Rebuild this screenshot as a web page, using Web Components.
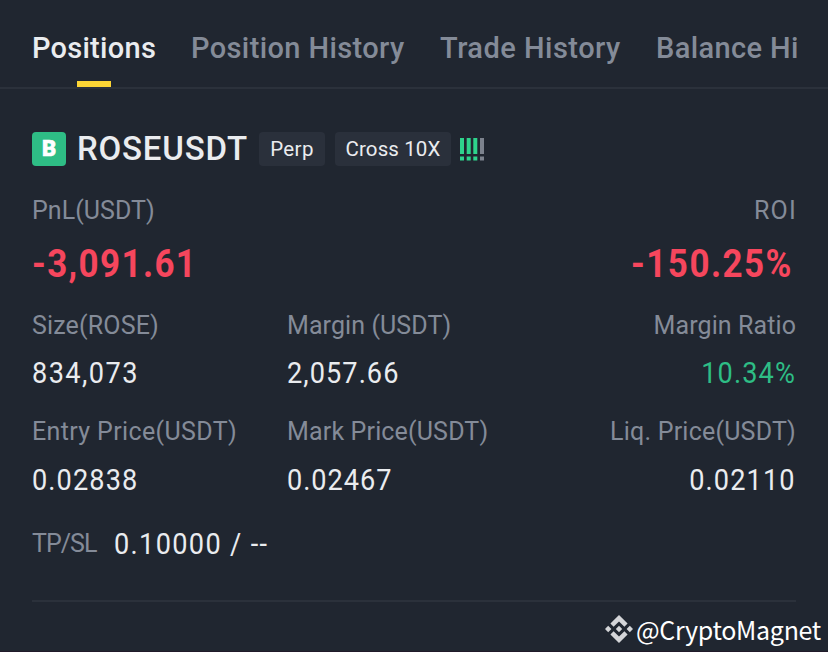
<!DOCTYPE html>
<html lang="en"><head><meta charset="utf-8"><title>Positions</title>
<style>html,body{margin:0;background:#202630}</style></head>
<body>
<positions-page></positions-page>
<script>
// One line of text: size, weight, tracking and horizontal scale come from attributes.
class UiText extends HTMLElement{
  connectedCallback(){
    const a=(n,d)=>this.getAttribute(n)||d;
    this.attachShadow({mode:'open'}).innerHTML=`<style>
    :host{display:block;white-space:nowrap;font:${a('weight','400')} ${a('size','25')}px/${a('line','30')}px Roboto,"Noto Sans",sans-serif;letter-spacing:${a('track','0')}px}
    span{display:inline-block;transform:scaleX(${a('scale','1')});transform-origin:${a('origin','left')} center}
    </style><span><slot></slot></span>`;
  }
}
customElements.define('ui-text',UiText);

class TabBar extends HTMLElement{
  constructor(){super();this.attachShadow({mode:'open'}).innerHTML=`<style>
  :host{display:flex;box-sizing:border-box;height:89px;border-bottom:2px solid #2b313b;padding:0 31.5px 0 32px;color:#848b98}
  nav{display:flex;flex:1;min-width:0;overflow:hidden}
  div{flex:none;display:flex;flex-direction:column;align-items:center;justify-content:space-between;height:87px;padding-top:28px;box-sizing:border-box}
  .on{color:#eaecef}
  .on i{width:34px;height:6px;background:#fcd535}
  </style><nav>
  <div class="on" style="width:159px;padding-right:35px;"><ui-text weight="500" size="29" line="40" track=".28">Positions</ui-text><i></i></div>
  <div style="width:249px;align-items:flex-start"><ui-text weight="500" size="29" line="40" track=".39">Position History</ui-text></div>
  <div style="width:216px;align-items:flex-start"><ui-text weight="500" size="29" line="40" track=".48">Trade History</ui-text></div>
  <div><ui-text weight="500" size="29" line="40" track=".38">Balance History</ui-text></div></nav>`;}
}
customElements.define('tab-bar',TabBar);

class TagChip extends HTMLElement{
  constructor(){super();this.attachShadow({mode:'open'}).innerHTML=`<style>
  :host{display:flex;align-items:center;justify-content:center;height:34px;border-radius:4px;background:#2a303b;color:#eaecef}
  </style><slot></slot>`;}
}
customElements.define('tag-chip',TagChip);

class SideBadge extends HTMLElement{
  constructor(){super();this.attachShadow({mode:'open'}).innerHTML=`<style>
  :host{display:flex;align-items:center;justify-content:center;width:34px;height:34px;border-radius:4px;background:#2ebd85;color:#fff;font:900 22px/34px Roboto,sans-serif;-webkit-text-stroke:.6px #fff}
  </style><slot></slot>`;}
}
customElements.define('side-badge',SideBadge);

class RiskMeter extends HTMLElement{
  constructor(){super();this.attachShadow({mode:'open'}).innerHTML=`<style>
  :host{display:block;width:24px;height:23px}svg{display:block}</style>
  <svg width="24" height="23"><g fill="#2ed38c"><path d="M0 0h4v16H0zM6.7 0h4v16h-4zM13.3 0h4v16h-4zM0 18.5h4V22.5H0zM6.7 18.5h4V22.5h-4zM13.3 18.5h4V22.5h-4z"/></g><path fill="#7c828d" d="M20 0h4v16h-4zM20 18.5h4V22.5h-4z"/></svg>`;}
}
customElements.define('risk-meter',RiskMeter);

// Label above a value.
class StatCell extends HTMLElement{
  constructor(){super();this.attachShadow({mode:'open'}).innerHTML=`<style>
  :host{display:flex;flex-direction:column;align-items:flex-start;gap:var(--gap,17.5px);color:#eaecef}
  :host([end]){align-items:flex-end}
  :host([tone=red]){color:#f6465d}
  :host([tone=green]){color:#2ebd85}
  ::slotted([slot=label]){color:#848b98;font-weight:400}
  </style><slot name="label"></slot><slot></slot>`;}
}
customElements.define('stat-cell',StatCell);

class WaterMark extends HTMLElement{
  constructor(){super();this.attachShadow({mode:'open'}).innerHTML=`<style>
  :host{display:flex;align-items:center;justify-content:flex-end;gap:3px;color:#fff;font:400 25px/36px "Noto Sans CJK SC",sans-serif;letter-spacing:-.3px}
  svg{display:block}</style>
  <svg width="28" height="28" viewBox="0 0 28 28" fill="#d4d5d8"><path d="M14 0l8.6 8.6-3.2 3.2L14 6.4l-5.4 5.4-3.2-3.2zM14 28l8.6-8.6-3.2-3.2-5.4 5.4-5.4-5.4-3.2 3.2zM14 10.8l3.2 3.2-3.2 3.2-3.2-3.2zM3.2 10.8L6.4 14l-3.2 3.2L0 14zM24.8 10.8L28 14l-3.2 3.2-3.2-3.2z"/></svg><span><slot></slot></span>`;}
}
customElements.define('water-mark',WaterMark);

class PositionsPage extends HTMLElement{
  constructor(){super();this.attachShadow({mode:'open'}).innerHTML=`<style>
  :host{display:block;box-sizing:border-box;width:828px;height:652px;overflow:hidden;background:#202630;color:#eaecef;border-bottom:1px solid #211a2a}
  main{padding:43px 32px 0}
  .head{display:flex;align-items:center;height:34px}
  .head ui-text.sym{width:182px;margin-left:11px}
  .row{display:grid;grid-template-columns:255px 1fr auto}
  .pnl{margin-top:30px}.size{margin-top:26.5px}.price{margin-top:29px}
  .tp{display:flex;align-items:center;margin-top:33px;height:32px;border:0}
  .tp .k{color:#848b98;width:82px}
  hr{margin:40px 0 0;border:0;height:2px;background:#2b313b}
  water-mark{padding:9px 7px 0 0}
  </style>
  <tab-bar></tab-bar>
  <main>
  <div class="head"><side-badge>B</side-badge><ui-text class="sym" weight="500" size="33" line="40" track=".79">ROSEUSDT</ui-text>
   <tag-chip style="width:66px"><ui-text size="20.5" track=".4">Perp</ui-text></tag-chip>
   <tag-chip style="width:116px;margin:0 9px 0 10px"><ui-text size="20.5" track=".12">Cross 10X</ui-text></tag-chip><risk-meter></risk-meter></div>
  <div class="row pnl">
   <stat-cell tone="red" style="--gap:18px"><ui-text slot="label" track=".04">PnL(USDT)</ui-text><ui-text weight="700" size="38" line="40" track="1.5" scale=".92">-3,091.61</ui-text></stat-cell><span></span>
   <stat-cell tone="red" end style="--gap:18px"><ui-text slot="label" size="25" track="1.2" style="margin-right:-1px">ROI</ui-text><ui-text weight="700" size="38" line="40" track="1.6" scale=".92" origin="right" style="margin-right:3px">-150.25%</ui-text></stat-cell></div>
  <div class="row size">
   <stat-cell><ui-text slot="label" track=".16">Size(ROSE)</ui-text><ui-text size="29.5" track="1.55" scale=".92">834,073</ui-text></stat-cell>
   <stat-cell><ui-text slot="label" track=".09">Margin (USDT)</ui-text><ui-text size="29.5" track="1.15" scale=".92">2,057.66</ui-text></stat-cell>
   <stat-cell end tone="green"><ui-text slot="label" track=".09">Margin Ratio</ui-text><ui-text size="29.5" track="1.2" scale=".92" origin="right">10.34%</ui-text></stat-cell></div>
  <div class="row price">
   <stat-cell><ui-text slot="label" track=".36">Entry Price(USDT)</ui-text><ui-text size="29.5" track="1.2" scale=".92">0.02838</ui-text></stat-cell>
   <stat-cell><ui-text slot="label" track=".16">Mark Price(USDT)</ui-text><ui-text size="29.5" track="1.05" scale=".92">0.02467</ui-text></stat-cell>
   <stat-cell end><ui-text slot="label" track=".21">Liq. Price(USDT)</ui-text><ui-text size="29.5" track="1.2" scale=".92" origin="right">0.02110</ui-text></stat-cell></div>
  <div class="tp"><ui-text class="k" track="-.96">TP/SL</ui-text><ui-text size="29.5" track="1.45" scale=".92">0.10000 / --</ui-text></div>
  <hr>
  </main>
  <water-mark>@CryptoMagnet</water-mark>`;}
}
customElements.define('positions-page',PositionsPage);
</script></body></html>
